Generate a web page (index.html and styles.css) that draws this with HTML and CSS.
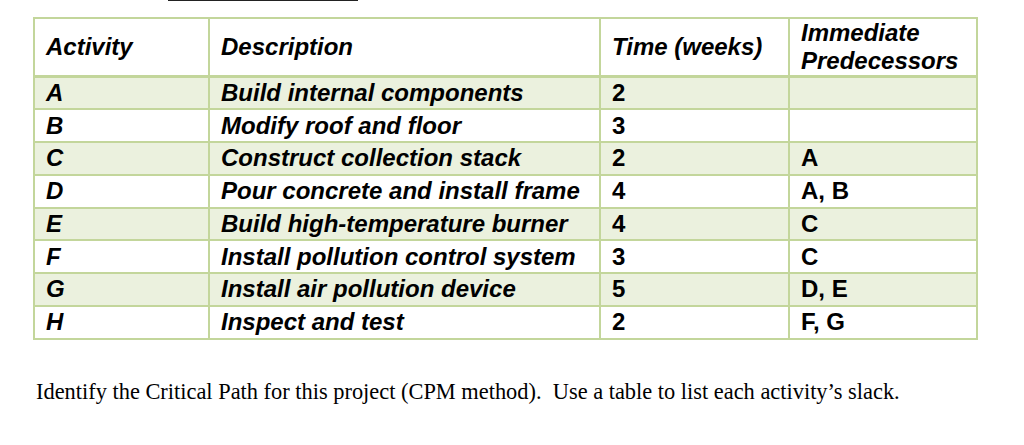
FILE: index.html
```html
<!DOCTYPE html>
<html>
<head>
<meta charset="utf-8">
<link rel="stylesheet" href="styles.css">
</head>
<body>
<div class="topline"></div>
<table class="cpm">
  <colgroup>
    <col class="c1"><col class="c2"><col class="c3"><col class="c4">
  </colgroup>
  <thead>
    <tr class="head">
      <th>Activity</th>
      <th>Description</th>
      <th>Time (weeks)</th>
      <th>Immediate<br>Predecessors</th>
    </tr>
  </thead>
  <tbody>
    <tr class="band"><td class="it">A</td><td class="it">Build internal components</td><td>2</td><td></td></tr>
    <tr><td class="it">B</td><td class="it">Modify roof and floor</td><td>3</td><td></td></tr>
    <tr class="band"><td class="it">C</td><td class="it">Construct collection stack</td><td>2</td><td>A</td></tr>
    <tr><td class="it">D</td><td class="it">Pour concrete and install frame</td><td>4</td><td>A, B</td></tr>
    <tr class="band"><td class="it">E</td><td class="it">Build high-temperature burner</td><td>4</td><td>C</td></tr>
    <tr><td class="it">F</td><td class="it">Install pollution control system</td><td>3</td><td>C</td></tr>
    <tr class="band"><td class="it">G</td><td class="it">Install air pollution device</td><td>5</td><td>D, E</td></tr>
    <tr><td class="it">H</td><td class="it">Inspect and test</td><td>2</td><td>F, G</td></tr>
  </tbody>
</table>
<p class="question">Identify the Critical Path for this project (CPM method).&nbsp; Use a table to list each activity’s slack.</p>
</body>
</html>
```

FILE: styles.css
```css
html, body {
  margin: 0;
  padding: 0;
  background: #ffffff;
}
.topline {
  width: 190px;
  height: 1px;
  margin-left: 168px;
  background: #222222;
}
.cpm {
  margin-left: 33px;
  margin-top: 16px;
  border-collapse: collapse;
  table-layout: fixed;
  width: 945px;
  font-family: "Liberation Sans", Arial, sans-serif;
  font-weight: bold;
  font-size: 24px;
  color: #000000;
}
.c1 { width: 175px; }
.c2 { width: 391px; }
.c3 { width: 189px; }
.c4 { width: 188px; }
.cpm th, .cpm td {
  border: 2px solid #c3d69b;
  padding: 0 0 0 11px;
  text-align: left;
  vertical-align: middle;
  white-space: nowrap;
  line-height: 28px;
}
.cpm th {
  font-style: italic;
}
.cpm td.it {
  font-style: italic;
}
.cpm .head {
  height: 58px;
}
.cpm .head th {
  border-bottom-width: 3px;
}
.cpm tbody tr {
  height: 32.75px;
}
.cpm tr.band td {
  background: #ebf1de;
}
.question {
  margin: 39px 0 0 36px;
  font-family: "Liberation Serif", "Times New Roman", serif;
  font-size: 22.4px;
  color: #000000;
}
```
